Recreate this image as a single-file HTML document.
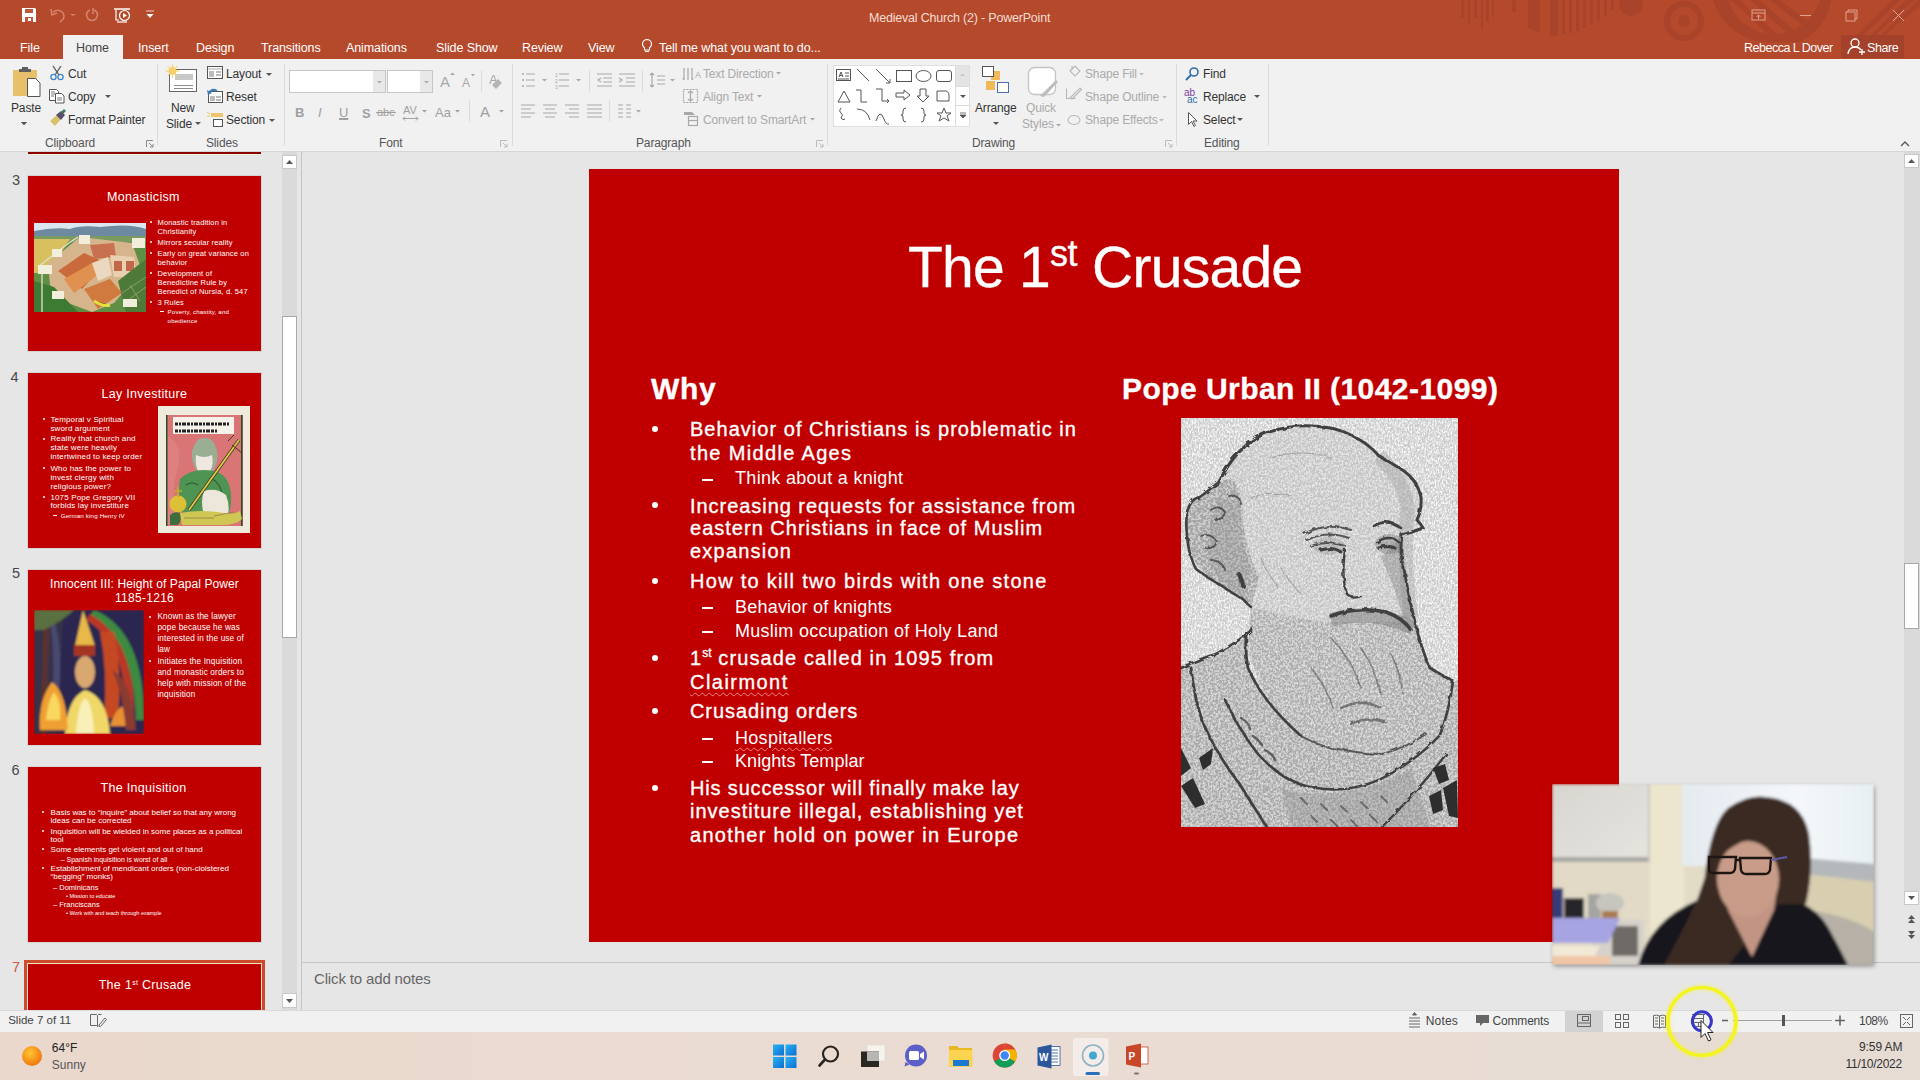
<!DOCTYPE html>
<html><head><meta charset="utf-8">
<style>
*{margin:0;padding:0;box-sizing:border-box}
html,body{width:1920px;height:1080px;overflow:hidden;background:#E6E6E6;font-family:"Liberation Sans",sans-serif;position:relative}
.a{position:absolute;white-space:nowrap}
#titlebar{position:absolute;left:0;top:0;width:1920px;height:59px;background:#B5492B;overflow:hidden}
#ribbon{position:absolute;left:0;top:59px;width:1920px;height:93px;background:#F1F1F1;border-bottom:1px solid #D6D6D6}
.tab{position:absolute;top:41px;font-size:12.5px;color:#fff;letter-spacing:-0.1px}
.rt{position:absolute;font-size:12px;line-height:14px;color:#333;white-space:nowrap;letter-spacing:-0.15px}
.dis{color:#AAAAAA}
.glabel{position:absolute;top:136px;font-size:12px;line-height:14px;color:#555;white-space:nowrap;letter-spacing:-0.15px}
.sep{position:absolute;top:4px;width:1px;height:86px;background:#DADADA}
#status{position:absolute;left:0;top:1010px;width:1920px;height:22px;background:#F1F1F1;border-top:1px solid #DADADA}
#taskbar{position:absolute;left:0;top:1032px;width:1920px;height:48px;background:#EAD9CD}
.slide{position:absolute;background:#C00000;overflow:hidden}
.st{position:absolute;color:#fff;white-space:nowrap;-webkit-text-stroke:0.35px #fff}
.l1{font-size:20px;line-height:23px;letter-spacing:0.9px}
.l1 sup{font-size:12px;vertical-align:0;position:relative;top:-8px;letter-spacing:0}
.l2{font-size:18px;line-height:23px;letter-spacing:0.1px;-webkit-text-stroke:0}
.dot{position:absolute;width:6px;height:6px;border-radius:50%;background:#fff}
.dash{position:absolute;width:11px;height:2px;background:#fff}
.sq{text-decoration:underline wavy #E88;text-decoration-thickness:1px;text-underline-offset:3px}
</style></head><body>

<div id="titlebar">
<svg class="a" style="left:0;top:0" width="1920" height="59">
 <g fill="#A8432A" opacity="0.85">
  <rect x="1461" y="0" width="3" height="18"/><rect x="1468" y="0" width="2" height="24"/><rect x="1474" y="0" width="3" height="18"/><rect x="1481" y="0" width="2" height="30"/><rect x="1486" y="0" width="3" height="22"/><rect x="1492" y="0" width="2" height="16"/>
  <rect x="1512" y="0" width="4" height="12"/>
  <path d="M1528 0 L1540 0 L1540 32 L1528 28 Z"/>
  <rect x="1550" y="0" width="8" height="36"/><rect x="1562" y="0" width="3" height="34"/><rect x="1569" y="0" width="3" height="33"/><rect x="1576" y="0" width="3" height="31"/><rect x="1583" y="0" width="3" height="28"/><rect x="1590" y="0" width="3" height="25"/><rect x="1597" y="0" width="3" height="21"/><rect x="1604" y="0" width="3" height="16"/><rect x="1611" y="0" width="3" height="10"/>
  <circle cx="1631" cy="4" r="12"/>
  <circle cx="1684" cy="21" r="17" fill="none" stroke="#A8432A" stroke-width="6"/>
  <circle cx="1684" cy="21" r="6"/>
  <path d="M1713 0 A 60 60 0 0 0 1778 42 L1800 42 A 55 55 0 0 0 1831 0 L1820 0 A 48 48 0 0 1 1728 0 Z" />
  <path d="M1731 0 L1770 36 L1776 33 L1740 0 Z M1750 0 L1788 34 L1794 30 L1760 0 Z M1770 0 L1806 28 L1812 24 L1780 0 Z"/>
  <path d="M1850 42 L1892 0 L1900 0 L1856 42 Z M1866 40 L1906 0 L1914 0 L1872 38 Z M1880 36 L1918 0 L1920 0 L1920 6 L1886 34 Z"/>
 </g>
 <!-- save icon -->
 <g fill="#fff">
  <path d="M22 8 h13 l1 1 v13 h-14 z" fill="#fff"/>
  <rect x="25" y="9" width="8" height="4" fill="#C0573A"/>
  <rect x="25" y="17" width="8" height="5" fill="#C0573A"/>
  <rect x="28" y="18" width="3" height="3" fill="#fff"/>
 </g>
 <!-- undo -->
 <path d="M53 12 q6 -4 10 1 q3 5 -3 9" fill="none" stroke="#D3826B" stroke-width="1.6"/>
 <path d="M51 9 l1 6 l5 -2" fill="none" stroke="#D3826B" stroke-width="1.6"/>
 <path d="M70 14 l3 2 l3 -2" fill="#D3826B"/>
 <!-- redo -->
 <circle cx="92" cy="15" r="5.5" fill="none" stroke="#D3826B" stroke-width="1.6"/>
 <rect x="90" y="8" width="4" height="5" fill="#B5492B"/>
 <path d="M93 8 v6" stroke="#D3826B" stroke-width="1.6"/>
 <!-- slideshow from start -->
 <path d="M114 9 h16" stroke="#fff" stroke-width="1.5"/>
 <path d="M116 10 v10 h3" stroke="#fff" stroke-width="1.2" fill="none"/>
 <circle cx="124.5" cy="15.5" r="5" fill="none" stroke="#fff" stroke-width="1.2"/>
 <path d="M123 13 l4 2.5 l-4 2.5 z" fill="#fff"/>
 <path d="M117 22 h10" stroke="#fff" stroke-width="1.2"/>
 <!-- customize -->
 <path d="M146 11 h8" stroke="#E8B9AA" stroke-width="1.2"/>
 <path d="M146.5 14 h7 l-3.5 4 z" fill="#fff"/>
 <!-- window controls -->
 <rect x="1752" y="10" width="13" height="10" fill="none" stroke="#E2A290" stroke-width="1"/>
 <path d="M1752 13 h13 M1758.5 15 v4 M1756.5 17 l2 -2 l2 2" stroke="#E2A290" stroke-width="1" fill="none"/>
 <path d="M1800 15.5 h11" stroke="#E2A290" stroke-width="1"/>
 <rect x="1846" y="12" width="9" height="9" fill="none" stroke="#E2A290" stroke-width="1"/>
 <path d="M1848 12 v-2 h9 v9 h-2" fill="none" stroke="#E2A290" stroke-width="1"/>
 <path d="M1893 10 l11 11 M1904 10 l-11 11" stroke="#E2A290" stroke-width="1"/>
 <!-- home tab -->
 <rect x="63" y="35" width="60" height="24" fill="#F1F1F1"/>
 <!-- share -->
 <rect x="1841" y="35" width="63" height="23" fill="#A3412A"/>
 <circle cx="1855" cy="43" r="4" fill="none" stroke="#fff" stroke-width="1.3"/>
 <path d="M1848 54 q1 -7 7 -7 q4 0 6 3" fill="none" stroke="#fff" stroke-width="1.3"/>
 <path d="M1859 52 h6 M1862 49 v6" stroke="#fff" stroke-width="1.3"/>
</svg>
<div class="tab" style="left:20px">File</div>
<div class="tab" style="left:76px;color:#444">Home</div>
<div class="tab" style="left:138px">Insert</div>
<div class="tab" style="left:196px">Design</div>
<div class="tab" style="left:261px">Transitions</div>
<div class="tab" style="left:346px">Animations</div>
<div class="tab" style="left:436px">Slide Show</div>
<div class="tab" style="left:522px">Review</div>
<div class="tab" style="left:588px">View</div>
<svg class="a" style="left:641px;top:38px" width="12" height="16"><path d="M6 1.5 a4.5 4.5 0 0 0 -2.5 8.2 v2.3 h5 v-2.3 a4.5 4.5 0 0 0 -2.5 -8.2 z" fill="none" stroke="#fff" stroke-width="1.1"/><path d="M4 13.5 h4" stroke="#fff" stroke-width="1.1"/></svg>
<div class="tab" style="left:659px">Tell me what you want to do...</div>
<div class="a" style="left:869px;top:11px;font-size:12.5px;color:#F5DDD5;letter-spacing:-0.2px">Medieval Church (2) - PowerPoint</div>
<div class="tab" style="left:1744px;letter-spacing:-0.5px">Rebecca L Dover</div>
<div class="tab" style="left:1867px;letter-spacing:-0.4px">Share</div>
</div>

<div id="ribbon"></div>
<div id="rib" class="a" style="left:0;top:0;width:1920px;height:152px">
<svg class="a" style="left:0;top:0" width="1920" height="152">
 <!-- separators -->
 <g fill="#DCDCDC">
  <rect x="157" y="64" width="1" height="82"/><rect x="284" y="64" width="1" height="82"/><rect x="512" y="64" width="1" height="82"/>
  <rect x="827" y="64" width="1" height="82"/><rect x="1176" y="64" width="1" height="82"/><rect x="1268" y="64" width="1" height="82"/>
  <rect x="481" y="70" width="1" height="22"/><rect x="469" y="100" width="1" height="22"/>
  <rect x="589" y="70" width="1" height="22"/><rect x="642" y="70" width="1" height="22"/><rect x="609" y="100" width="1" height="22"/>
 </g>
 <!-- launchers -->
 <g fill="none" stroke="#8A8A8A" stroke-width="1">
  <path d="M146.5 147 v-6.5 h6.5 M149 143 l4 4 M150 147 h3 v-3"/>
  <path d="M500.5 147 v-6.5 h6.5 M503 143 l4 4 M504 147 h3 v-3" stroke="#BBB"/>
  <path d="M816.5 147 v-6.5 h6.5 M819 143 l4 4 M820 147 h3 v-3" stroke="#BBB"/>
  <path d="M1165.5 147 v-6.5 h6.5 M1168 143 l4 4 M1169 147 h3 v-3" stroke="#BBB"/>
 </g>
 <!-- Paste -->
 <rect x="13" y="70" width="24" height="26" fill="#E8C06C"/>
 <path d="M19 72 v-3 h3 v-2 h6 v2 h3 v3 z" fill="#5E5E5E"/>
 <path d="M27.5 78.5 h8 l4.5 4.5 v13.5 h-12.5 z" fill="#fff" stroke="#555" stroke-width="1"/>
 <path d="M21 125 l3 -3 h-6 z" fill="#444" transform="translate(3,0)"/>
 <path d="M21 122 h6 l-3 3 z" fill="#555"/>
 <!-- Cut -->
 <g fill="none" stroke-width="1.3">
  <path d="M53 66 l6 9 M61 66 l-6 9" stroke="#555"/>
  <circle cx="53.5" cy="77" r="2.6" stroke="#3E86C5"/><circle cx="60.5" cy="77" r="2.6" stroke="#3E86C5"/>
 </g>
 <!-- Copy -->
 <g fill="#fff" stroke="#555" stroke-width="1">
  <path d="M49.5 89.5 h7 l2 2 v9 h-9 z"/>
  <path d="M55.5 93.5 h6 l2.5 2.5 v7 h-8.5 z"/>
 </g>
 <path d="M51 92 h4 M51 94 h4 M51 96 h3 M57 98 h5 M57 100 h5" stroke="#555" stroke-width="0.8"/>
 <path d="M105 95 h6 l-3 3 z" fill="#555"/>
 <!-- Format painter -->
 <path d="M50 121 l7 -6 l4 4 l-6 7 z" fill="#D9C36A"/>
 <path d="M56 115 l5 -4 l4 4 l-4 5 z" fill="#5B4D6E"/>
 <path d="M61 112 l3 -3 l2 2 l-3 3 z" fill="#3E7A52"/>
 <!-- New slide -->
 <rect x="169.5" y="69.5" width="27" height="22" fill="#fff" stroke="#666" stroke-width="1"/>
 <rect x="175" y="74" width="18" height="6" fill="#C8C8C8"/>
 <path d="M174 85.5 h19 M174 88.5 h19" stroke="#8A8A8A" stroke-width="1"/>
 <circle cx="172.5" cy="71" r="4" fill="#F5D26B"/>
 <path d="M172.5 64 v14 M165.5 71 h14 M167.5 66 l10 10 M177.5 66 l-10 10" stroke="#F5D26B" stroke-width="1"/>
 <path d="M195 122 h6 l-3 3 z" fill="#555"/>
 <!-- Layout -->
 <rect x="207.5" y="66.5" width="15" height="12" fill="#fff" stroke="#555"/>
 <path d="M208 69 h14" stroke="#AAA"/>
 <rect x="209" y="71" width="5" height="6" fill="#BBB"/>
 <path d="M216 72 h5 M216 75 h5" stroke="#777"/>
 <path d="M266 73 h6 l-3 3 z" fill="#555"/>
 <!-- Reset -->
 <rect x="208.5" y="91.5" width="14" height="11" fill="#fff" stroke="#555"/>
 <rect x="210" y="96" width="5" height="5" fill="#BBB"/>
 <path d="M216 97 h5 M216 100 h5" stroke="#777"/>
 <path d="M209 93 q3 -5 8 -2" fill="none" stroke="#3E7AB5" stroke-width="2"/>
 <path d="M207 90 l1 5 l4 -2 z" fill="#3E7AB5"/>
 <!-- Section -->
 <rect x="211" y="113" width="12" height="4" fill="#F0C46A"/>
 <rect x="213.5" y="119.5" width="9" height="7" fill="#fff" stroke="#555"/>
 <path d="M207 112 l3 2 M207 116 h3" stroke="#F0C46A"/>
 <path d="M269 119 h6 l-3 3 z" fill="#555"/>
 <!-- Font boxes -->
 <rect x="289.5" y="70.5" width="96" height="22" fill="#fff" stroke="#C6C6C6"/>
 <rect x="373" y="71" width="12" height="21" fill="#E8E8E8"/>
 <path d="M377 81 h5 l-2.5 2.5 z" fill="#AAA"/>
 <rect x="387.5" y="70.5" width="45" height="22" fill="#fff" stroke="#C6C6C6"/>
 <rect x="420" y="71" width="12" height="21" fill="#E8E8E8"/>
 <path d="M424 81 h5 l-2.5 2.5 z" fill="#AAA"/>
 <g fill="#A8A8A8" font-family="Liberation Sans" >
  <text x="440" y="87" font-size="15">A</text><path d="M450 75 l2.5 -2.5 l2.5 2.5 z"/>
  <text x="462" y="87" font-size="12">A</text><path d="M471 74 l2 2.5 l2 -2.5 z"/>
  <text x="489" y="84" font-size="13">A</text>
 </g>
 <path d="M492 85 l6 -6 l4 4 l-6 6 z" fill="#B5B5B5"/>
 <g fill="#A0A0A0" font-family="Liberation Sans">
  <text x="295" y="117" font-size="13" font-weight="bold">B</text>
  <text x="318" y="117" font-size="13" font-style="italic">I</text>
  <text x="339" y="117" font-size="13" text-decoration="underline">U</text>
  <path d="M339 119.5 h9" stroke="#A0A0A0" stroke-width="1"/>
  <text x="362" y="118" font-size="13" font-weight="bold">S</text>
  <text x="377" y="116" font-size="11">abc</text>
  <path d="M376 112.5 h20" stroke="#A0A0A0"/>
  <text x="403" y="114" font-size="11">AV</text>
  <path d="M403 118.5 h15 M403 118.5 l2 -2 M403 118.5 l2 2 M418 118.5 l-2 -2 M418 118.5 l-2 2" stroke="#A0A0A0" fill="none"/>
  <text x="435" y="117" font-size="13">Aa</text>
  <text x="480" y="117" font-size="15">A</text>
  <path d="M422 110 h5 l-2.5 2.5 z M455 110 h5 l-2.5 2.5 z M499 110 h5 l-2.5 2.5 z"/>
 </g>
 <!-- Paragraph icons -->
 <g stroke="#A8A8A8" stroke-width="1.2" fill="none">
  <path d="M526 74 h9 M526 80 h9 M526 86 h9"/>
  <path d="M559 74 h10 M559 80 h10 M559 86 h10"/>
  <path d="M597 74 h15 M603 78 h9 M603 82 h9 M597 86 h15 M601 78 l-3 2 l3 2"/>
  <path d="M619 74 h16 M626 78 h9 M626 82 h9 M619 86 h16 M619 78 l3 2 l-3 2"/>
  <path d="M657 76 h8 M657 80 h8 M657 84 h8 M652 73 v14 M650 75 l2 -2 l2 2 M650 85 l2 2 l2 -2"/>
  <path d="M521 105 h14 M521 109 h10 M521 113 h14 M521 117 h10"/>
  <path d="M543 105 h14 M545 109 h10 M543 113 h14 M545 117 h10"/>
  <path d="M565 105 h14 M569 109 h10 M565 113 h14 M569 117 h10"/>
  <path d="M587 105 h15 M587 109 h15 M587 113 h15 M587 117 h15"/>
  <path d="M618 105 h5 M618 109 h5 M618 113 h5 M618 117 h5 M626 105 h5 M626 109 h5 M626 113 h5 M626 117 h5"/>
  <path d="M684 68 v12 M688 68 v12 M692 68 v12 M684 80 l-1 -2 M692 80 l1 -2"/>
  <rect x="683.5" y="89.5" width="14" height="13" stroke-dasharray="2 1"/>
  <path d="M690.5 91 v10 M688 93 l2.5 -2 l2.5 2 M688 99 l2.5 2 l2.5 -2"/>
  <rect x="688.5" y="116.5" width="9" height="9"/>
  <path d="M688.5 120.5 h9"/>
 </g>
 <g fill="#A8A8A8">
  <circle cx="523" cy="74" r="1"/><circle cx="523" cy="80" r="1"/><circle cx="523" cy="86" r="1"/>
  <text x="695" y="78" font-size="9" font-family="Liberation Sans">A</text>
  <path d="M684 112 h8 l3 3 h-11 z"/>
  <path d="M542 79 h5 l-2.5 2.5 z M576 79 h5 l-2.5 2.5 z M670 79 h5 l-2.5 2.5 z M636 110 h5 l-2.5 2.5 z M776 72 h5 l-2.5 2.5 z M757 95 h5 l-2.5 2.5 z M810 118 h5 l-2.5 2.5 z"/>
 </g>
 <text x="555" y="77" font-size="5" fill="#A8A8A8" font-family="Liberation Sans">1</text>
 <text x="555" y="83" font-size="5" fill="#A8A8A8" font-family="Liberation Sans">2</text>
 <text x="555" y="89" font-size="5" fill="#A8A8A8" font-family="Liberation Sans">3</text>
 <!-- Shapes gallery -->
 <rect x="833.5" y="65.5" width="136" height="61" fill="#fff" stroke="#C6C6C6" stroke-dasharray="1 1"/>
 <rect x="956" y="66" width="13" height="20" fill="#E4E4E4"/>
 <path d="M955.5 66 v60 M956 86.5 h13 M956 105.5 h13" stroke="#DADADA"/>
 <path d="M960 76 h5 l-2.5 -2.5 z" fill="#C8C8C8"/>
 <path d="M960 95 h6 l-3 3 z" fill="#555"/>
 <path d="M960 113 h6 M960 115 h6 l-3 3 z" fill="#555" stroke="#555" stroke-width="0.8"/>
 <g fill="none" stroke="#555" stroke-width="1">
  <rect x="836.5" y="69.5" width="14" height="11"/><path d="M839 77 l2 -5 l2 5 M839.8 75.5 h2.4 M845 73 h4 M845 76 h4 M838 79 h11"/>
  <path d="M857 69 l12 12"/>
  <path d="M876 69 l14 14 M890 83 v-4 M890 83 h-4"/>
  <rect x="896.5" y="70.5" width="15" height="11"/>
  <ellipse cx="923.5" cy="76" rx="7.5" ry="5.5"/>
  <rect x="936.5" y="70.5" width="15" height="11" rx="2.5"/>
  <path d="M838 102 l6 -11 l6 11 z"/>
  <path d="M856 90 h5 v12 h6"/>
  <path d="M876 89 h6 v12 h7 M889 101 l-2 -2 M889 101 l-2 2"/>
  <path d="M896 93 h8 v-3 l6 5 l-6 5 v-3 h-8 z"/>
  <path d="M920 89 h6 v7 h3 l-6 6 l-6 -6 h3 z"/>
  <path d="M937 91 h7 a4 4 0 0 1 5 4 v6 h-12 z"/>
  <path d="M841 108 q-3 3 0 5 q3 2 0 5 q2 3 4 1"/>
  <path d="M857 109 q10 0 13 11"/>
  <path d="M876 121 q4 -13 8 -2 q2 6 5 5"/>
  <path d="M906 108 q-3 0 -3 3 v2 q0 2 -2 2 q2 0 2 2 v2 q0 3 3 3"/>
  <path d="M921 108 q3 0 3 3 v2 q0 2 2 2 q-2 0 -2 2 v2 q0 3 -3 3"/>
  <path d="M944 108 l2 5 h5 l-4 3 l2 5 l-5 -3 l-5 3 l2 -5 l-4 -3 h5 z"/>
 </g>
 <!-- Arrange -->
 <rect x="991" y="71" width="9" height="9" fill="#F0B95A"/>
 <rect x="986" y="81" width="9" height="9" fill="#F0B95A"/>
 <rect x="982.5" y="66.5" width="11" height="10" fill="#fff" stroke="#555"/>
 <rect x="997.5" y="82.5" width="11" height="10" fill="#fff" stroke="#4F6FA8"/>
 <path d="M993 122 h6 l-3 3 z" fill="#555"/>
 <!-- Quick styles -->
 <rect x="1028.5" y="67.5" width="27" height="27" rx="6" fill="#fff" stroke="#C4C4C4" stroke-width="1.3"/>
 <path d="M1040 96 l16 -16 l2 2 l-14 15 z" fill="#BDBDBD"/>
 <path d="M1056 124 h5 l-2.5 2.5 z" fill="#AAA"/>
 <!-- shape fill/outline/effects icons -->
 <g fill="none" stroke="#B8B8B8" stroke-width="1.1">
  <path d="M1070 71 l5 -5 l5 5 l-5 5 z M1072 66 v4"/>
  <path d="M1066.5 88.5 v10 h9 M1070 98 l10 -10 l1.5 1.5 l-10 10"/>
  <ellipse cx="1074" cy="120" rx="6" ry="4.5"/>
 </g>
 <path d="M1139 73 h5 l-2.5 2.5 z M1162 96 h5 l-2.5 2.5 z M1159 119 h5 l-2.5 2.5 z" fill="#BBB"/>
 <!-- Find -->
 <circle cx="1194" cy="72" r="4" fill="none" stroke="#2F6FA8" stroke-width="1.6"/>
 <path d="M1191 75 l-5 5" stroke="#2F6FA8" stroke-width="2"/>
 <text x="1184" y="96" font-size="10" fill="#7A3E9D" font-family="Liberation Sans">ab</text>
 <text x="1187" y="103" font-size="10" fill="#2F6FA8" font-family="Liberation Sans">ac</text>
 <path d="M1254 95 h6 l-3 3 z" fill="#555"/>
 <path d="M1188.5 112.5 v12 l3 -3 l2.5 5 l1.5 -1 l-2.5 -4.5 h4 z" fill="#fff" stroke="#555" stroke-width="1"/>
 <path d="M1237 118 h6 l-3 3 z" fill="#555"/>
 <!-- collapse ribbon -->
 <path d="M1901 146 l4 -4 l4 4" fill="none" stroke="#555" stroke-width="1.3"/>
</svg>
<div class="rt" style="left:68px;top:67px">Cut</div>
<div class="rt" style="left:68px;top:90px">Copy</div>
<div class="rt" style="left:68px;top:113px">Format Painter</div>
<div class="rt" style="left:11px;top:101px">Paste</div>
<div class="glabel" style="left:45px">Clipboard</div>
<div class="rt" style="left:171px;top:101px">New</div>
<div class="rt" style="left:166px;top:117px">Slide</div>
<div class="rt" style="left:226px;top:67px">Layout</div>
<div class="rt" style="left:226px;top:90px">Reset</div>
<div class="rt" style="left:226px;top:113px">Section</div>
<div class="glabel" style="left:206px">Slides</div>
<div class="glabel" style="left:379px">Font</div>
<div class="rt dis" style="left:703px;top:67px">Text Direction</div>
<div class="rt dis" style="left:703px;top:90px">Align Text</div>
<div class="rt dis" style="left:703px;top:113px">Convert to SmartArt</div>
<div class="glabel" style="left:636px">Paragraph</div>
<div class="rt" style="left:975px;top:101px">Arrange</div>
<div class="rt dis" style="left:1026px;top:101px">Quick</div>
<div class="rt dis" style="left:1022px;top:117px">Styles</div>
<div class="glabel" style="left:972px">Drawing</div>
<div class="rt dis" style="left:1085px;top:67px">Shape Fill</div>
<div class="rt dis" style="left:1085px;top:90px">Shape Outline</div>
<div class="rt dis" style="left:1085px;top:113px">Shape Effects</div>
<div class="rt" style="left:1203px;top:67px">Find</div>
<div class="rt" style="left:1203px;top:90px">Replace</div>
<div class="rt" style="left:1203px;top:113px">Select</div>
<div class="glabel" style="left:1204px">Editing</div>
</div>

<!-- thumbnail pane -->
<div id="thumbs" class="a" style="left:0;top:0;width:301px;height:1010px;overflow:hidden">
<div class="a" style="left:0;top:152px;width:301px;height:858px;background:#E6E6E6"></div>
<div class="a" style="left:282px;top:152px;width:15px;height:858px;background:#DADADA"></div>
<div class="a" style="left:282px;top:316px;width:15px;height:322px;background:#fff;border:1px solid #A8A8A8"></div>
<div class="a" style="left:282px;top:155px;width:15px;height:14px;background:#fff;border:1px solid #C8C8C8"></div>
<svg class="a" style="left:282px;top:155px" width="15" height="14"><path d="M4 9 h7 l-3.5 -4 z" fill="#555"/></svg>
<div class="a" style="left:282px;top:993px;width:15px;height:15px;background:#fff;border:1px solid #C8C8C8"></div>
<svg class="a" style="left:282px;top:993px" width="15" height="15"><path d="M4 6 h7 l-3.5 4 z" fill="#555"/></svg>

<div class="a" style="left:28px;top:152px;width:233px;height:2px;background:#8A0000"></div><div class="a" style="left:28px;top:154px;width:233px;height:1px;background:#F4F0E0"></div>
<div style="position:absolute;left:12.0px;top:171.5px;font-size:14.5px;line-height:17px;color:#484848;white-space:nowrap;">3</div>
<div class="a" style="left:27px;top:175px;width:235px;height:177px;background:#C00000;border:1px solid #D4D4D4;overflow:hidden"></div>
<div style="position:absolute;left:107.0px;top:189.7px;font-size:12.5px;line-height:15px;color:#fff;white-space:nowrap;letter-spacing:0.3px;">Monasticism</div>
<svg class="a" style="left:34px;top:223px" width="112" height="89" viewBox="0 0 112 89">
<defs><filter id="b3"><feGaussianBlur stdDeviation="0.7"/></filter></defs>
<g filter="url(#b3)">
<rect width="112" height="89" fill="#5E8E44"/>
<rect width="112" height="10" fill="#DCE6EE"/>
<path d="M0 8 q20 -4 36 -2 q10 -4 30 -2 q30 -4 46 2 v8 h-112 z" fill="#6E8AA0"/>
<path d="M0 13 h112 v6 h-112 z" fill="#7A9A60"/>
<path d="M0 16 h36 l-22 34 h-14 z" fill="#D8C060"/>
<path d="M14 40 L46 14 L98 20 L108 48 L80 80 L58 89 L34 80 L16 62 Z" fill="#D6B48C"/>
<path d="M24 48 L50 30 L72 40 L48 66 Z" fill="#C86A3A"/>
<path d="M30 56 L58 40 L66 50 L40 70 Z" fill="#E09050"/>
<path d="M50 66 L76 56 L88 70 L64 86 Z" fill="#D07A40"/>
<path d="M56 22 L80 20 L82 34 L60 36 Z" fill="#C87050"/>
<path d="M76 32 L100 34 L102 54 L80 54 Z" fill="#E8D0B0"/>
<path d="M80 38 h8 v10 h-8 z M92 38 h8 v10 h-8 z" fill="#C06848"/>
<path d="M58 40 L74 34 L78 52 L64 58 Z" fill="#EAD8C0"/>
<path d="M84 58 L112 36 L112 89 L92 89 Z" fill="#4E7A38"/>
<path d="M88 70 L112 54 M90 80 L112 64 M96 62 L106 78" stroke="#8AA070" stroke-width="1"/>
<path d="M0 58 L20 64 L44 89 L0 89 Z" fill="#3E7A30"/>
<path d="M8 89 v-44 M4 44 q30 -24 40 -30" stroke="#E0E0D0" stroke-width="1.3" fill="none"/>
<path d="M60 78 q10 6 16 4" stroke="#E8E040" stroke-width="3"/>
</g>
<g fill="#F2EEDC"><rect x="45" y="12" width="11" height="9"/><rect x="98" y="15" width="13" height="10"/><rect x="18" y="26" width="10" height="8"/><rect x="4" y="42" width="14" height="9"/><rect x="18" y="68" width="12" height="8"/><rect x="89" y="76" width="14" height="8"/></g>
</svg>
<div style="position:absolute;left:157.5px;top:217.8px;font-size:7.5px;line-height:9px;color:#fff;white-space:nowrap;letter-spacing:0.15px;">Monastic tradition in</div>
<div style="position:absolute;left:157.5px;top:226.9px;font-size:7.5px;line-height:9px;color:#fff;white-space:nowrap;letter-spacing:0.15px;">Christianity</div>
<div style="position:absolute;left:157.5px;top:237.8px;font-size:7.5px;line-height:9px;color:#fff;white-space:nowrap;letter-spacing:0.15px;">Mirrors secular reality</div>
<div style="position:absolute;left:157.5px;top:248.9px;font-size:7.5px;line-height:9px;color:#fff;white-space:nowrap;letter-spacing:0.15px;">Early on great variance on</div>
<div style="position:absolute;left:157.5px;top:257.6px;font-size:7.5px;line-height:9px;color:#fff;white-space:nowrap;letter-spacing:0.15px;">behavior</div>
<div style="position:absolute;left:157.5px;top:268.9px;font-size:7.5px;line-height:9px;color:#fff;white-space:nowrap;letter-spacing:0.15px;">Development of</div>
<div style="position:absolute;left:157.5px;top:278.0px;font-size:7.5px;line-height:9px;color:#fff;white-space:nowrap;letter-spacing:0.15px;">Benedictine Rule by</div>
<div style="position:absolute;left:157.5px;top:286.8px;font-size:7.5px;line-height:9px;color:#fff;white-space:nowrap;letter-spacing:0.15px;">Benedict of Nursia, d. 547</div>
<div style="position:absolute;left:157.5px;top:297.9px;font-size:7.5px;line-height:9px;color:#fff;white-space:nowrap;letter-spacing:0.15px;">3 Rules</div>
<div class="a" style="left:149.5px;top:220.9px;width:2px;height:2px;border-radius:1px;background:#fff"></div>
<div class="a" style="left:149.5px;top:240.9px;width:2px;height:2px;border-radius:1px;background:#fff"></div>
<div class="a" style="left:149.5px;top:252.0px;width:2px;height:2px;border-radius:1px;background:#fff"></div>
<div class="a" style="left:149.5px;top:272.0px;width:2px;height:2px;border-radius:1px;background:#fff"></div>
<div class="a" style="left:149.5px;top:301.0px;width:2px;height:2px;border-radius:1px;background:#fff"></div>
<div style="position:absolute;left:167.6px;top:307.3px;font-size:6.2px;line-height:9px;color:#fff;white-space:nowrap;letter-spacing:0.15px;">Poverty, chastity, and</div>
<div style="position:absolute;left:167.6px;top:315.5px;font-size:6.2px;line-height:9px;color:#fff;white-space:nowrap;letter-spacing:0.15px;">obedience</div>
<div class="a" style="left:160px;top:311px;width:4px;height:1px;background:#fff"></div>
<div style="position:absolute;left:10.5px;top:368.5px;font-size:14.5px;line-height:17px;color:#484848;white-space:nowrap;">4</div>
<div class="a" style="left:27px;top:372px;width:235px;height:177px;background:#C00000;border:1px solid #D4D4D4;overflow:hidden"></div>
<div style="position:absolute;left:101.5px;top:387.1px;font-size:12.5px;line-height:15px;color:#fff;white-space:nowrap;letter-spacing:0.3px;">Lay Investiture</div>
<svg class="a" style="left:158px;top:406px" width="92" height="127" viewBox="0 0 92 127">
<defs><filter id="b4"><feGaussianBlur stdDeviation="0.5"/></filter></defs>
<rect width="92" height="127" fill="#EEEADC"/>
<g transform="translate(8,9)" filter="url(#b4)">
<rect width="77" height="111" fill="#D97474"/>
<path d="M0 20 q20 10 10 40 q-6 20 4 50 h-14 z" fill="#E08888" opacity="0.6"/>
<rect x="0" y="0" width="1.5" height="111" fill="#2F4A2A"/>
<rect x="75" y="0" width="1.5" height="111" fill="#2F4A2A"/>
<rect x="7" y="2" width="61" height="17" fill="#F6F2EA"/>
<path d="M9 9 h55 M9 16 h42" stroke="#222" stroke-width="3.2" stroke-dasharray="3 1 2 1 4 1"/>
<path d="M26 36 q4 -14 12 -13 q10 -1 13 13 q2 10 -4 20 q-8 6 -16 0 q-6 -8 -5 -20 z" fill="#9AAE94"/>
<path d="M30 40 q8 4 16 0 q2 10 -2 16 q-6 4 -12 0 q-3 -6 -2 -16 z" fill="#EEE8E0"/>
<path d="M14 64 q12 -12 34 -8 q18 4 17 30 q0 10 -4 14 l-44 0 q-6 -20 -3 -36 z" fill="#4F9452"/>
<path d="M20 70 q6 -4 12 0 M46 64 q8 4 10 14" stroke="#2E5E30" stroke-width="1.2" fill="none"/>
<path d="M38 76 q12 -4 22 4 q4 10 2 20 l-24 0 q-4 -14 0 -24 z" fill="#EDE6DA"/>
<path d="M23 95 L73 25" stroke="#3A3A20" stroke-width="3.2"/>
<path d="M23 95 L73 25" stroke="#E0CA48" stroke-width="1.8"/>
<path d="M66 30 l10 8 M62 26 l6 -6" stroke="#3A3A20" stroke-width="1"/>
<circle cx="12" cy="89" r="8.5" fill="#DCC034"/>
<path d="M12 72 v10 M8 76 h8" stroke="#C8A830" stroke-width="1.6"/>
<path d="M4 100 q4 -4 10 -2 q2 8 -2 12 h-8 z" fill="#3E6E3A"/>
<path d="M14 98 q20 -4 44 0 q10 2 16 -2 l2 8 q-6 6 -20 6 l-40 0 z" fill="#CFC652"/>
<path d="M18 103 h30 M48 101 l20 -4" stroke="#8A8040" stroke-width="0.8"/>
</g>
</svg>
<div style="position:absolute;left:50.4px;top:414.7px;font-size:8px;line-height:9px;color:#fff;white-space:nowrap;letter-spacing:0.15px;">Temporal v Spiritual</div>
<div style="position:absolute;left:50.4px;top:423.7px;font-size:8px;line-height:9px;color:#fff;white-space:nowrap;letter-spacing:0.15px;">sword argument</div>
<div style="position:absolute;left:50.4px;top:434.4px;font-size:8px;line-height:9px;color:#fff;white-space:nowrap;letter-spacing:0.15px;">Reality that church and</div>
<div style="position:absolute;left:50.4px;top:443.3px;font-size:8px;line-height:9px;color:#fff;white-space:nowrap;letter-spacing:0.15px;">state were heavily</div>
<div style="position:absolute;left:50.4px;top:452.1px;font-size:8px;line-height:9px;color:#fff;white-space:nowrap;letter-spacing:0.15px;">intertwined to keep order</div>
<div style="position:absolute;left:50.4px;top:464.0px;font-size:8px;line-height:9px;color:#fff;white-space:nowrap;letter-spacing:0.15px;">Who has the power to</div>
<div style="position:absolute;left:50.4px;top:472.9px;font-size:8px;line-height:9px;color:#fff;white-space:nowrap;letter-spacing:0.15px;">invest clergy with</div>
<div style="position:absolute;left:50.4px;top:481.8px;font-size:8px;line-height:9px;color:#fff;white-space:nowrap;letter-spacing:0.15px;">religious power?</div>
<div style="position:absolute;left:50.4px;top:493.1px;font-size:8px;line-height:9px;color:#fff;white-space:nowrap;letter-spacing:0.15px;">1075 Pope Gregory VII</div>
<div style="position:absolute;left:50.4px;top:501.4px;font-size:8px;line-height:9px;color:#fff;white-space:nowrap;letter-spacing:0.15px;">forbids lay investiture</div>
<div class="a" style="left:42.5px;top:418.0px;width:2px;height:2px;border-radius:1px;background:#fff"></div>
<div class="a" style="left:42.5px;top:437.7px;width:2px;height:2px;border-radius:1px;background:#fff"></div>
<div class="a" style="left:42.5px;top:467.3px;width:2px;height:2px;border-radius:1px;background:#fff"></div>
<div class="a" style="left:42.5px;top:496.4px;width:2px;height:2px;border-radius:1px;background:#fff"></div>
<div style="position:absolute;left:60.7px;top:511.2px;font-size:6.2px;line-height:9px;color:#fff;white-space:nowrap;letter-spacing:0.15px;">German king Henry IV</div>
<div class="a" style="left:53px;top:515px;width:4px;height:1px;background:#fff"></div>
<div style="position:absolute;left:12.0px;top:565.0px;font-size:14.5px;line-height:17px;color:#484848;white-space:nowrap;">5</div>
<div class="a" style="left:27px;top:569px;width:235px;height:177px;background:#C00000;border:1px solid #D4D4D4;overflow:hidden"></div>
<div style="position:absolute;left:144.5px;top:576.6px;font-size:12px;line-height:14px;color:#fff;white-space:nowrap;transform:translateX(-50%);letter-spacing:0.1px;">Innocent III: Height of Papal Power</div>
<div style="position:absolute;left:144.5px;top:591.4px;font-size:12px;line-height:14px;color:#fff;white-space:nowrap;transform:translateX(-50%);letter-spacing:0.3px;">1185-1216</div>
<svg class="a" style="left:34px;top:610px" width="110" height="124" viewBox="0 0 110 124">
<defs><filter id="b5"><feGaussianBlur stdDeviation="1.3"/></filter></defs>
<g filter="url(#b5)">
<rect width="110" height="124" fill="#2A2850"/>
<path d="M0 0 h30 l-8 124 h-22 z" fill="#34304A"/>
<path d="M10 0 l6 0 l-4 124 h-6 z" fill="#5A3030"/>
<path d="M20 10 q10 30 4 80 l-6 0 q4 -40 -2 -80 z" fill="#4A4A70"/>
<path d="M0 0 h40 q-10 10 -30 20 l-10 0 z" fill="#5A7040"/>
<path d="M60 0 q50 20 50 110 l-8 0 q-2 -80 -46 -104 z" fill="#3C8A40"/>
<path d="M56 4 q44 24 44 100 l-8 0 q0 -70 -40 -94 z" fill="#B83828"/>
<path d="M66 22 q8 40 4 86 l14 0 q4 -50 -4 -86 z" fill="#C44A22"/>
<path d="M49 0 L41 36 L61 36 Z" fill="#E8B848"/>
<rect x="40" y="35" width="21" height="11" fill="#A43424"/>
<ellipse cx="51" cy="62" rx="10" ry="16" fill="#D8A870"/>
<path d="M31 124 q2 -36 20 -44 q22 6 25 44 z" fill="#F0D868"/>
<path d="M42 124 q2 -30 9 -36 q8 6 9 36 z" fill="#F8F0B8"/>
<path d="M6 120 q-2 -30 12 -48 q14 10 16 48 z" fill="#F0A030"/>
<path d="M12 110 q2 -20 8 -28 q8 10 6 28 z" fill="#F8D860"/>
<path d="M76 116 q4 -14 12 -20 q6 10 4 20 z" fill="#E89030"/>
<path d="M78 60 q20 10 24 60 l-10 0 q-4 -40 -14 -60 z" fill="#8A3A30"/>
</g>
</svg>
<div style="position:absolute;left:157.4px;top:612.3px;font-size:8.2px;line-height:9px;color:#fff;white-space:nowrap;letter-spacing:0.15px;">Known as the lawyer</div>
<div style="position:absolute;left:157.4px;top:623.4px;font-size:8.2px;line-height:9px;color:#fff;white-space:nowrap;letter-spacing:0.15px;">pope because he was</div>
<div style="position:absolute;left:157.4px;top:634.2px;font-size:8.2px;line-height:9px;color:#fff;white-space:nowrap;letter-spacing:0.15px;">interested in the use of</div>
<div style="position:absolute;left:157.4px;top:645.3px;font-size:8.2px;line-height:9px;color:#fff;white-space:nowrap;letter-spacing:0.15px;">law</div>
<div style="position:absolute;left:157.4px;top:657.0px;font-size:8.2px;line-height:9px;color:#fff;white-space:nowrap;letter-spacing:0.15px;">Initiates the Inquisition</div>
<div style="position:absolute;left:157.4px;top:668.0px;font-size:8.2px;line-height:9px;color:#fff;white-space:nowrap;letter-spacing:0.15px;">and monastic orders to</div>
<div style="position:absolute;left:157.4px;top:678.9px;font-size:8.2px;line-height:9px;color:#fff;white-space:nowrap;letter-spacing:0.15px;">help with mission of the</div>
<div style="position:absolute;left:157.4px;top:690.0px;font-size:8.2px;line-height:9px;color:#fff;white-space:nowrap;letter-spacing:0.15px;">inquisition</div>
<div class="a" style="left:149.4px;top:615.6px;width:2px;height:2px;border-radius:1px;background:#fff"></div>
<div class="a" style="left:149.4px;top:660.3px;width:2px;height:2px;border-radius:1px;background:#fff"></div>
<div style="position:absolute;left:11.5px;top:762.0px;font-size:14.5px;line-height:17px;color:#484848;white-space:nowrap;">6</div>
<div class="a" style="left:27px;top:766px;width:235px;height:177px;background:#C00000;border:1px solid #D4D4D4;overflow:hidden"></div>
<div style="position:absolute;left:100.6px;top:781.2px;font-size:12.5px;line-height:15px;color:#fff;white-space:nowrap;letter-spacing:0.3px;">The Inquisition</div>
<div style="position:absolute;left:50.6px;top:807.9px;font-size:8px;line-height:9px;color:#fff;white-space:nowrap;letter-spacing:0px;">Basis was to “inquire” about belief so that any wrong</div>
<div style="position:absolute;left:50.6px;top:815.7px;font-size:8px;line-height:9px;color:#fff;white-space:nowrap;letter-spacing:0px;">ideas can be corrected</div>
<div style="position:absolute;left:50.6px;top:826.6px;font-size:8px;line-height:9px;color:#fff;white-space:nowrap;letter-spacing:0px;">Inquisition will be wielded in some places as a political</div>
<div style="position:absolute;left:50.6px;top:834.6px;font-size:8px;line-height:9px;color:#fff;white-space:nowrap;letter-spacing:0px;">tool</div>
<div style="position:absolute;left:50.6px;top:844.6px;font-size:8px;line-height:9px;color:#fff;white-space:nowrap;letter-spacing:0px;">Some elements get violent and out of hand</div>
<div style="position:absolute;left:60.7px;top:854.7px;font-size:7px;line-height:9px;color:#fff;white-space:nowrap;letter-spacing:0px;">– Spanish inquisition is worst of all</div>
<div style="position:absolute;left:50.6px;top:864.1px;font-size:8px;line-height:9px;color:#fff;white-space:nowrap;letter-spacing:0px;">Establishment of mendicant orders (non-cloistered</div>
<div style="position:absolute;left:50.6px;top:872.3px;font-size:8px;line-height:9px;color:#fff;white-space:nowrap;letter-spacing:0px;">“begging” monks)</div>
<div style="position:absolute;left:53.0px;top:883.2px;font-size:7.5px;line-height:9px;color:#fff;white-space:nowrap;letter-spacing:0px;">– Dominicans</div>
<div style="position:absolute;left:66.0px;top:891.9px;font-size:5.5px;line-height:9px;color:#fff;white-space:nowrap;letter-spacing:0px;">• Mission to educate</div>
<div style="position:absolute;left:53.0px;top:900.2px;font-size:7.5px;line-height:9px;color:#fff;white-space:nowrap;letter-spacing:0px;">– Franciscans</div>
<div style="position:absolute;left:66.0px;top:909.0px;font-size:5.5px;line-height:9px;color:#fff;white-space:nowrap;letter-spacing:0px;">• Work with and teach through example</div>
<div class="a" style="left:42.3px;top:811.2px;width:2px;height:2px;border-radius:1px;background:#fff"></div>
<div class="a" style="left:42.3px;top:829.9px;width:2px;height:2px;border-radius:1px;background:#fff"></div>
<div class="a" style="left:42.3px;top:847.9px;width:2px;height:2px;border-radius:1px;background:#fff"></div>
<div class="a" style="left:42.3px;top:867.4px;width:2px;height:2px;border-radius:1px;background:#fff"></div>
<div style="position:absolute;left:12px;top:959.4px;font-size:14.5px;line-height:17px;color:#D0583C;white-space:nowrap;">7</div>
<div class="a" style="left:24px;top:960px;width:241px;height:60px;border:3px solid #CD4A2E;background:#F0E0C0"></div>
<div class="a" style="left:28px;top:964px;width:233px;height:50px;background:#C00000"></div>
<div style="position:absolute;left:98.7px;top:977.9px;font-size:12.5px;line-height:15px;color:#fff;white-space:nowrap;letter-spacing:0.3px;">The 1<sup style="font-size:7px;vertical-align:0;position:relative;top:-4px">st</sup> Crusade</div>
</div>

<!-- main slide -->
<div class="slide" style="left:589px;top:169px;width:1030px;height:773px">
<div class="st" style="left:319px;top:65.2px;font-size:57px;line-height:66px;letter-spacing:-0.75px">The 1<span style="font-size:36px;position:relative;top:-21px;margin-left:0px;letter-spacing:-0.5px">st</span> Crusade</div>
<div class="st" style="left:62px;top:203.4px;font-size:30px;line-height:34px;font-weight:bold;letter-spacing:0.7px">Why</div>
<div class="st" style="left:533px;top:203.0px;font-size:30px;line-height:34px;font-weight:bold;letter-spacing:0.45px">Pope Urban II (1042-1099)</div>
<div class="st l1" style="left:101px;top:249.3px;letter-spacing:1.03px">Behavior of Christians is problematic in</div>
<div class="dot" style="left:63px;top:257.2px"></div>
<div class="st l1" style="left:101px;top:272.6px;letter-spacing:1.34px">the Middle Ages</div>
<div class="st l1" style="left:101px;top:325.5px;letter-spacing:0.95px">Increasing requests for assistance from</div>
<div class="dot" style="left:63px;top:333.4px"></div>
<div class="st l1" style="left:101px;top:348.4px;letter-spacing:1.01px">eastern Christians in face of Muslim</div>
<div class="st l1" style="left:101px;top:371.3px;letter-spacing:1.21px">expansion</div>
<div class="st l1" style="left:101px;top:401.1px;letter-spacing:1.29px">How to kill two birds with one stone</div>
<div class="dot" style="left:63px;top:409.0px"></div>
<div class="st l1" style="left:101px;top:477.9px;letter-spacing:1.12px">1<sup>st</sup> crusade called in 1095 from</div>
<div class="dot" style="left:63px;top:485.8px"></div>
<div class="st l1" style="left:101px;top:502.0px;letter-spacing:1.46px"><span class="sq">Clairmont</span></div>
<div class="st l1" style="left:101px;top:531.2px;letter-spacing:0.93px">Crusading orders</div>
<div class="dot" style="left:63px;top:539.1px"></div>
<div class="st l1" style="left:101px;top:608.0px;letter-spacing:0.84px">His successor will finally make lay</div>
<div class="dot" style="left:63px;top:615.9px"></div>
<div class="st l1" style="left:101px;top:630.9px;letter-spacing:1.00px">investiture illegal, establishing yet</div>
<div class="st l1" style="left:101px;top:655.0px;letter-spacing:1.26px">another hold on power in Europe</div>
<div class="st l2" style="left:146px;top:298.3px;letter-spacing:0.31px">Think about a knight</div>
<div class="dash" style="left:113px;top:309.5px"></div>
<div class="st l2" style="left:146px;top:427.0px;letter-spacing:0.21px">Behavior of knights</div>
<div class="dash" style="left:113px;top:438.2px"></div>
<div class="st l2" style="left:146px;top:451.1px;letter-spacing:0.27px">Muslim occupation of Holy Land</div>
<div class="dash" style="left:113px;top:462.3px"></div>
<div class="st l2" style="left:146px;top:557.6px;letter-spacing:0.30px"><span class="sq">Hospitallers</span></div>
<div class="dash" style="left:113px;top:568.8px"></div>
<div class="st l2" style="left:146px;top:581.2px;letter-spacing:0.06px">Knights Templar</div>
<div class="dash" style="left:113px;top:592.4px"></div>
<svg class="a" id="pope" style="left:592px;top:249px" width="277" height="409" viewBox="0 0 277 409">
<defs>
 <filter id="spk" x="0" y="0" width="100%" height="100%">
  <feTurbulence type="fractalNoise" baseFrequency="0.6 0.3" numOctaves="2" seed="11"/>
  <feColorMatrix type="matrix" values="0 0 0 0 0.25  0 0 0 0 0.25  0 0 0 0 0.25  0 0 0 -5 3.0"/>
 </filter>
 <filter id="spk2" x="0" y="0" width="100%" height="100%">
  <feTurbulence type="fractalNoise" baseFrequency="0.4" numOctaves="3" seed="5"/>
  <feColorMatrix type="matrix" values="0 0 0 0 0.2  0 0 0 0 0.2  0 0 0 0 0.2  0 0 0 -6 3.6"/>
 </filter>
 <filter id="wht" x="0" y="0" width="100%" height="100%">
  <feTurbulence type="fractalNoise" baseFrequency="0.7 0.45" numOctaves="1" seed="2"/>
  <feColorMatrix type="matrix" values="0 0 0 0 1  0 0 0 0 1  0 0 0 0 1  0 0 0 7 -3.7"/>
 </filter>
 <filter id="rough" x="-5%" y="-5%" width="110%" height="110%"><feTurbulence type="fractalNoise" baseFrequency="0.15" numOctaves="2" seed="7"/><feDisplacementMap in="SourceGraphic" scale="3.5"/></filter>
 <clipPath id="headc"><path d="M38 64 Q55 28 85 15 Q110 6 132 8 Q155 9 170 17 Q188 26 198 38 Q212 46 223 53 Q236 62 240 79 Q241 92 236 102 L242 110 Q228 114 221 117 Q220 135 223 151 Q228 180 234 204 L150 204 Q110 200 70 189 Q50 175 38 166 Q15 151 8 132 Q4 110 6 94 Q10 80 19 79 Q28 72 38 64 Z"/></clipPath>
 <clipPath id="hairc"><path d="M38 64 Q28 72 19 79 Q10 80 6 94 Q4 110 8 132 Q15 151 38 166 Q50 175 70 189 L78 160 Q60 120 62 90 Q60 70 50 60 Z"/></clipPath>
 <clipPath id="beardc"><path d="M70 189 Q110 200 150 204 L234 204 Q240 230 249 250 Q262 258 272 263 Q265 300 250 320 Q220 338 163 332 Q130 325 119 317 Q95 290 86 282 Q72 250 67 230 Z"/></clipPath>
 <clipPath id="robec"><path d="M0 250 Q20 240 35 236 Q55 225 67 215 L67 250 Q75 268 86 282 Q100 300 119 317 Q140 330 163 332 Q220 338 250 320 Q265 300 272 263 L277 262 L277 409 L0 409 Z"/></clipPath>
</defs>
<rect width="277" height="409" fill="#E2E2E2"/>
<rect width="277" height="409" filter="url(#spk)" opacity="0.26"/>
<rect width="277" height="409" filter="url(#wht)" opacity="0.85"/>
<g clip-path="url(#headc)"><rect width="277" height="409" fill="#DADADA"/><rect width="277" height="409" filter="url(#spk2)" opacity="0.22"/><rect width="277" height="409" filter="url(#wht)" opacity="0.5"/></g>
<g clip-path="url(#hairc)"><rect width="277" height="409" fill="#CDCDCD"/><rect width="277" height="409" filter="url(#spk2)" opacity="0.5"/></g>
<g clip-path="url(#beardc)"><rect width="277" height="409" fill="#D0D0D0"/><rect width="277" height="409" filter="url(#spk2)" opacity="0.42"/><rect width="277" height="409" filter="url(#wht)" opacity="0.4"/></g>
<g clip-path="url(#robec)"><rect width="277" height="409" fill="#CECECE"/><rect width="277" height="409" filter="url(#spk2)" opacity="0.45"/><rect width="277" height="409" filter="url(#wht)" opacity="0.35"/></g>
<path d="M100 370 Q160 390 230 350 L250 409 L110 409 Z" fill="#8E8E8E" opacity="0.35"/>
<path d="M198 38 Q230 70 226 100 Q222 140 230 200" fill="none" stroke="#9A9A9A" stroke-width="14" opacity="0.35"/>
<path d="M150 202 Q190 190 232 210" fill="none" stroke="#707070" stroke-width="14" opacity="0.45"/>
<ellipse cx="208" cy="126" rx="14" ry="10" fill="#6A6A6A" opacity="0.35"/>
<ellipse cx="148" cy="128" rx="16" ry="9" fill="#7A7A7A" opacity="0.25"/>
<path d="M200 140 Q215 170 222 200 L234 204 Q226 170 221 117 Z" fill="#6A6A6A" opacity="0.3"/>
<path d="M40 80 Q20 110 30 150 Q45 170 62 178 L70 150 Q58 120 60 85 Z" fill="#8A8A8A" opacity="0.25"/>
<g fill="none" stroke="#404040" stroke-linecap="round" filter="url(#rough)">
 <path d="M38 64 Q55 28 85 15 Q110 6 132 8 Q155 9 170 17 Q188 26 198 38 Q212 46 223 53 Q236 62 240 79 Q241 92 236 102 Q240 106 242 110 Q232 114 221 117" stroke-width="3"/>
 <path d="M38 64 Q28 72 19 79 Q10 80 6 94 Q4 110 8 132 Q12 146 15 151 Q26 160 38 166 Q50 175 62 181 Q66 186 70 189" stroke-width="2.6"/>
 <path d="M30 92 q8 -6 14 2 q-2 8 -10 8 M20 118 q10 -4 16 6 q-4 8 -12 6 M30 142 q10 0 14 10 M48 78 q10 -2 12 8" stroke-width="1.8" opacity="0.8"/>
 <path d="M58 156 q4 8 4 12" stroke-width="4"/>
 <path d="M123 116 Q145 104 170 112 M126 122 Q146 112 168 120 M130 128 Q146 122 164 128" stroke-width="2" opacity="0.85"/>
 <path d="M140 132 q12 -4 20 2" stroke-width="3"/>
 <path d="M193 108 Q206 100 220 110 M196 124 Q208 116 218 124" stroke-width="2.6"/>
 <path d="M198 130 q8 -3 16 0" stroke-width="3.4"/>
 <path d="M221 117 Q218 135 223 151 Q228 180 234 204 Q240 230 249 250 Q262 258 272 263" stroke-width="2.8"/>
 <path d="M164 132 Q160 160 166 176 Q172 182 180 178" stroke-width="2.4"/>
 <path d="M150 198 Q175 188 205 194 Q222 200 230 212" stroke-width="3.6"/>
 <path d="M0 250 Q20 240 35 236 Q55 225 67 215 Q70 212 71 210" stroke-width="2.6"/>
 <path d="M10 250 Q14 285 23 307 Q38 340 58 365 Q72 388 86 409" stroke-width="2.8"/>
 <path d="M65 217 Q64 235 67 250 Q75 268 86 282 Q100 300 119 317" stroke-width="2.8"/>
 <path d="M44 282 Q58 312 77 336 Q95 356 115 365 Q138 373 163 371 Q190 368 211 355 Q240 338 259 317 Q268 294 272 263" stroke-width="2.6"/>
 <path d="M119 317 Q140 330 163 332 Q185 336 201 336 Q225 330 245 316" stroke-width="2" opacity="0.8"/>
 <path d="M265 336 Q240 370 201 409" stroke-width="2.4"/>
 <path d="M60 300 q8 4 10 12 M72 318 q6 4 10 10 M84 332 q8 4 10 10" stroke-width="2.4" opacity="0.75"/>
 <path d="M120 380 l6 6 M140 386 l6 6 M160 388 l6 6 M180 384 l6 6 M200 378 l6 6 M130 398 l6 6 M150 402 l6 6 M170 402 l6 6 M190 398 l6 6" stroke-width="2" opacity="0.6"/>
 <path d="M150 220 q20 20 30 50 M180 230 q14 20 20 46 M210 236 q10 20 12 40 M130 250 q14 16 22 40" stroke-width="1.6" opacity="0.5"/>
 <path d="M160 290 q20 -10 40 0 M170 306 q16 -8 34 -2" stroke-width="2.4" opacity="0.6"/>
 <path d="M90 40 q30 -10 60 0 M70 80 q20 -8 40 -2 M100 150 q10 16 20 26 M80 140 q6 16 18 30" stroke-width="1.2" opacity="0.3"/>
</g>
<g fill="#2E2E2E">
 <path d="M0 330 L10 350 L0 358 Z M0 368 L12 360 L24 386 L14 390 Z M18 340 L32 330 L30 346 L22 352 Z" />
 <path d="M252 350 L264 346 L268 362 L258 366 Z M262 370 L276 362 L277 400 L268 398 Z M248 378 L260 372 L262 392 L252 396 Z"/>
</g>
</svg>
</div>

<div class="a" style="left:301px;top:152px;width:1px;height:858px;background:#C4C4C4"></div>
<div id="status"></div>
<div id="taskbar"></div>
<div class="a" style="left:1904px;top:152px;width:16px;height:739px;background:#DADADA"></div>
<div class="a" style="left:1904px;top:154px;width:15px;height:14px;background:#fff;border:1px solid #C8C8C8"></div>
<svg class="a" style="left:1904px;top:154px" width="15" height="14"><path d="M4 9 h7 l-3.5 -4 z" fill="#555"/></svg>
<div class="a" style="left:1904px;top:563px;width:15px;height:66px;background:#fff;border:1px solid #A8A8A8"></div>
<div class="a" style="left:1904px;top:891px;width:15px;height:14px;background:#fff;border:1px solid #C8C8C8"></div>
<svg class="a" style="left:1904px;top:891px" width="16" height="50"><path d="M4 5 h7 l-3.5 4 z" fill="#555"/><path d="M4 28 h7 l-3.5 -4 z M4 32 h7 l-3.5 -4 z" fill="#555"/><path d="M4 40 h7 l-3.5 4 z M4 44 h7 l-3.5 4 z" fill="#555"/></svg>
<div class="a" style="left:302px;top:962px;width:1618px;height:1px;background:#C6C6C6"></div>
<div style="position:absolute;left:314.0px;top:969.6px;font-size:15px;line-height:18px;color:#666;white-space:nowrap;letter-spacing:-0.15px;">Click to add notes</div>
<svg class="a" style="left:1552px;top:784px;filter:drop-shadow(1px 2px 2px rgba(0,0,0,0.35))" width="322" height="181" viewBox="0 0 322 181">
<defs><filter id="bl"><feGaussianBlur stdDeviation="1.4"/></filter>
<linearGradient id="win" x1="0" y1="0" x2="1" y2="0"><stop offset="0" stop-color="#E4EAF0"/><stop offset="0.6" stop-color="#F4F7FA"/><stop offset="1" stop-color="#E8F0F2"/></linearGradient>
<linearGradient id="wb" x1="0" y1="0" x2="1" y2="1"><stop offset="0" stop-color="#D8D6D0"/><stop offset="1" stop-color="#E6E4DE"/></linearGradient></defs>
<g filter="url(#bl)">
<rect width="322" height="181" fill="#E2DCC6"/>
<rect x="0" y="0" width="98" height="78" fill="url(#wb)"/>
<rect x="0" y="73" width="98" height="5" fill="#A8A8A4"/>
<rect x="96" y="0" width="4" height="80" fill="#C8C6C0"/>
<rect x="98" y="0" width="34" height="181" fill="#ECE6CE"/>
<rect x="130" y="0" width="192" height="82" fill="url(#win)"/>
<path d="M252 74 L322 80 V98 L252 90 Z" fill="#B4B8BA"/>
<path d="M252 90 L322 98 V160 H252 Z" fill="#D8CEB0"/>
<rect x="0" y="78" width="98" height="64" fill="#E2DAC6"/>
<rect x="0" y="104" width="11" height="34" fill="#363A78"/>
<rect x="12" y="114" width="20" height="24" fill="#25252C"/>
<rect x="36" y="110" width="13" height="30" fill="#A4A4A2"/>
<ellipse cx="58" cy="119" rx="14" ry="10" fill="#C6C6BE"/>
<rect x="50" y="127" width="16" height="9" fill="#A87A4C"/>
<rect x="40" y="136" width="52" height="45" fill="#D6D2CA"/>
<rect x="60" y="142" width="26" height="30" fill="#6E6A66"/>
<path d="M0 134 h68 l-12 25 h-56 z" fill="#A6A4E2"/>
<path d="M0 162 h48 l-10 19 h-38 z" fill="#F2E8D6"/>
<rect x="0" y="172" width="58" height="9" fill="#F0C6A6"/>
<path d="M258 126 q45 8 64 22 v33 h-64 z" fill="#B6B0A6"/>
<path d="M86 181 q12 -45 60 -65 q30 -10 55 -8 q55 2 75 35 q10 18 20 38 z" fill="#18181D"/>
<path d="M112 181 Q140 130 152 100 Q158 40 176 24 Q196 10 214 13 Q250 16 257 50 Q262 85 254 120 L226 120 L176 181 Z" fill="#3A2A22"/>
<path d="M174 112 h50 l-2 14 l-22 47 l-24 -47 z" fill="#C29484"/>
<ellipse cx="196" cy="95" rx="31" ry="38" fill="#C89C88"/>
<path d="M158 80 q6 -50 50 -52 q38 2 46 42 q-12 -24 -34 -22 q-30 4 -62 32 z" fill="#3A2A22"/>
<path d="M154 90 q14 5 16 36 q-6 25 -14 55 h-30 q10 -40 28 -91 z" fill="#3A2A22"/>
</g>
<g fill="none" stroke="#1E1612" stroke-width="2.4">
<path d="M157 73 h27 l-1 12 q-1 4 -5 4 h-17 q-4 0 -4 -4 z"/>
<path d="M188 74 h31 l-1 12 q-1 4 -5 4 h-19 q-4 0 -5 -4 z"/>
<path d="M184 76 h4"/>
<path d="M219 76 l16 -3" stroke="#5A5AA8" stroke-width="2"/>
</g>
</svg>
<div style="position:absolute;left:8.2px;top:1012.8px;font-size:11.5px;line-height:14px;color:#444;white-space:nowrap;">Slide 7 of 11</div>
<svg class="a" style="left:89px;top:1013px" width="18" height="15"><path d="M1.5 1.5 h6 l1 1 v11 l-1 -1 h-6 z M8.5 2.5 l1 -1 h3" fill="none" stroke="#666" stroke-width="1"/><path d="M10 12 l6 -7 l1.5 1.5 l-6 7 h-1.5 z" fill="none" stroke="#666" stroke-width="1"/></svg>
<div class="a" style="left:1565px;top:1011px;width:38px;height:21px;background:#D2D2D2"></div>
<svg class="a" style="left:1400px;top:1010px" width="520" height="22">
<g fill="none" stroke="#666" stroke-width="1">
 <path d="M9 8 h11 M9 11 h11 M9 14 h11 M9 17 h11"/><path d="M12.5 5 l2 -2.5 l2 2.5 z" fill="#666"/>
 <rect x="177.5" y="4.5" width="13" height="12"/><rect x="182.5" y="6.5" width="6" height="4"/><path d="M178 13 h12"/>
 <rect x="215.5" y="4.5" width="5" height="5"/><rect x="223.5" y="4.5" width="5" height="5"/><rect x="215.5" y="12.5" width="5" height="5"/><rect x="223.5" y="12.5" width="5" height="5"/>
 <path d="M253.5 5.5 q3 -1 6 0.5 q3 -1.5 6 -0.5 v12 q-3 -1 -6 0.5 q-3 -1.5 -6 -0.5 z M259.5 6 v12 M255 8 h3 M255 11 h3 M255 14 h3 M261 8 h3 M261 11 h3 M261 14 h3"/>
 <path d="M292 4.5 h13 M293.5 4.5 v8 h10 v-8 M293.5 8.5 h10 M298.5 12.5 v4 M296 16.5 h5"/>
 <path d="M322 10.5 h6" stroke-width="1.6"/>
 <path d="M333 10.5 h99" stroke="#A0A0A0"/>
 <path d="M435 10.5 h10 M440 5.5 v10" stroke-width="1.6"/>
 <rect x="500.5" y="4.5" width="12" height="13"/>
 <path d="M503 7 l3 3 M510 7 l-3 3 M503 15 l3 -3 M510 15 l-3 -3"/>
</g>
<rect x="382" y="5" width="3" height="11" fill="#555"/>
<path d="M76 5 h13 v8 h-6 l-3 3 v-3 h-4 z" fill="#666"/>
</svg>
<div style="position:absolute;left:1425.7px;top:1014.1px;font-size:12px;line-height:14px;color:#444;white-space:nowrap;letter-spacing:0.2px;">Notes</div>
<div style="position:absolute;left:1492.6px;top:1014.1px;font-size:12px;line-height:14px;color:#444;white-space:nowrap;letter-spacing:-0.2px;">Comments</div>
<div style="position:absolute;left:1859.0px;top:1014.1px;font-size:12px;line-height:14px;color:#444;white-space:nowrap;letter-spacing:-0.5px;">108%</div>
<svg class="a" style="left:0;top:1032px" width="1920" height="48">
<defs>
 <linearGradient id="tb" x1="0" y1="0" x2="1" y2="0"><stop offset="0" stop-color="#EAD8CC"/><stop offset="0.5" stop-color="#EADCD2"/><stop offset="1" stop-color="#E6DCD4"/></linearGradient>
 <radialGradient id="sun" cx="0.4" cy="0.35" r="0.7"><stop offset="0" stop-color="#FFC830"/><stop offset="1" stop-color="#F07010"/></radialGradient>
 <linearGradient id="winb" x1="0" y1="0" x2="1" y2="1"><stop offset="0" stop-color="#28B4F0"/><stop offset="1" stop-color="#0A6ED4"/></linearGradient>
</defs>
<rect width="1920" height="48" fill="url(#tb)"/>
<circle cx="32" cy="24" r="10" fill="url(#sun)"/>
<rect x="773" y="12.5" width="11" height="11" fill="url(#winb)"/><rect x="785.5" y="12.5" width="11" height="11" fill="url(#winb)"/>
<rect x="773" y="25" width="11" height="11" fill="url(#winb)"/><rect x="785.5" y="25" width="11" height="11" fill="url(#winb)"/>
<circle cx="830.5" cy="22" r="7.5" fill="none" stroke="#2A2420" stroke-width="2.2"/>
<path d="M825 27.5 l-5.5 6" stroke="#2A2420" stroke-width="2.6" stroke-linecap="round"/>
<rect x="867" y="13" width="18" height="16" fill="#F6F2EE" stroke="#E0D8D0" stroke-width="0.6"/>
<rect x="861" y="19.5" width="18" height="15.5" fill="#2A2622"/>
<rect x="867" y="19.5" width="12" height="9.5" fill="#B8B6B2"/>
<circle cx="916" cy="23.5" r="11" fill="#5B5FC7"/>
<path d="M905.5 30 l-1 4.5 l5 -2 z" fill="#5B5FC7"/>
<rect x="909" y="19" width="10" height="9" rx="1.5" fill="#fff"/><path d="M920 22 l4 -2.5 v8 l-4 -2.5 z" fill="#fff"/>
<path d="M949 14 h8 l2 2 h13 v18.5 h-23 z" fill="#E8B820"/>
<rect x="949" y="18" width="23.5" height="16.5" fill="#FCD450"/>
<rect x="953" y="28" width="16" height="6" fill="#1A78D0"/>
<circle cx="1004.7" cy="23.5" r="12" fill="#DB4437"/>
<path d="M1004.7 23.5 L1015.1 29.5 A12 12 0 0 1 994.3 29.5 Z" fill="#0F9D58"/>
<path d="M1004.7 23.5 L1004.7 11.5 A12 12 0 0 1 1015.1 29.5 Z" fill="#F4B400"/>
<path d="M1004.7 11.5 A12 12 0 0 1 1015.1 17.5 L1004.7 17.5 Z" fill="#DB4437"/>
<circle cx="1004.7" cy="23.5" r="5.5" fill="#fff"/><circle cx="1004.7" cy="23.5" r="4.2" fill="#4285F4"/>
<rect x="1048" y="14.5" width="12" height="19" fill="#fff" stroke="#2B579A" stroke-width="0.8"/>
<path d="M1050 18 h8 M1050 21 h8 M1050 24 h8 M1050 27 h8 M1050 30 h8" stroke="#2B579A" stroke-width="0.8"/>
<path d="M1037.5 15.5 l14 -3 v24 l-14 -3 z" fill="#2B579A"/>
<text x="1039" y="28.5" font-size="10" font-weight="bold" fill="#fff" font-family="Liberation Sans">W</text>
<rect x="1073" y="6" width="35.5" height="38" rx="3" fill="#F3ECE8"/>
<circle cx="1093" cy="23.5" r="10.5" fill="none" stroke="#90B4C4" stroke-width="1.6"/>
<circle cx="1093" cy="23.5" r="4" fill="#42A8D0"/>
<rect x="1085.5" y="40" width="14.5" height="3" rx="1.5" fill="#2A6FB8"/>
<rect x="1137" y="15" width="11" height="17" fill="#fff" stroke="#C8462A" stroke-width="0.8"/>
<path d="M1126 14.5 l15 -3 v24 l-15 -3 z" fill="#C8462A"/>
<text x="1128.5" y="28" font-size="10" font-weight="bold" fill="#fff" font-family="Liberation Sans">P</text>
<rect x="1134" y="40.5" width="5" height="2" rx="1" fill="#777"/>
</svg>
<div style="position:absolute;left:51.8px;top:1041.3px;font-size:12px;line-height:14px;color:#222;white-space:nowrap;">64°F</div>
<div style="position:absolute;left:51.8px;top:1057.6px;font-size:12px;line-height:14px;color:#555;white-space:nowrap;">Sunny</div>
<div style="position:absolute;left:1859.0px;top:1040.4px;font-size:12px;line-height:14px;color:#333;white-space:nowrap;letter-spacing:-0.1px;">9:59 AM</div>
<div style="position:absolute;left:1845.6px;top:1056.6px;font-size:12px;line-height:14px;color:#333;white-space:nowrap;letter-spacing:-0.3px;">11/10/2022</div>
<svg class="a" style="left:1650px;top:970px" width="110" height="110">
<defs><filter id="glow"><feGaussianBlur stdDeviation="1.5"/></filter></defs>
<circle cx="51.9" cy="51.5" r="34" fill="none" stroke="#F4F43A" stroke-width="7" opacity="0.3" filter="url(#glow)"/>
<circle cx="51.9" cy="51.5" r="34" fill="none" stroke="#F4F420" stroke-width="3.6"/>
<circle cx="51.9" cy="51.3" r="9.5" fill="none" stroke="#3838C8" stroke-width="3"/>
<path d="M51 50.5 v17 l4 -4 l3.5 7.5 l2.5 -1.2 l-3.5 -7.3 h5.5 z" fill="#fff" stroke="#222" stroke-width="1"/>
</svg>

</body></html>
